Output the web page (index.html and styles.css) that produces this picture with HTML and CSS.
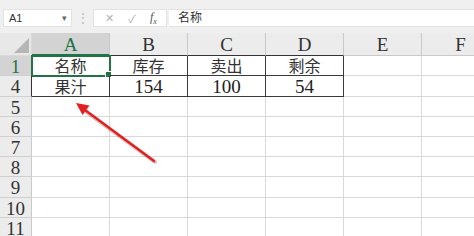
FILE: index.html
```html
<!DOCTYPE html>
<html lang="zh">
<head>
  <meta charset="UTF-8">
  <title>表格</title>
  <link rel="stylesheet" href="styles.css">
</head>
<body>
  <div class="page">
    <div class="toolbar">
      <div class="namebox">
        <span>A1</span>
        <span class="drop">&#9662;</span>
      </div>
      <div class="dots">&#8942;</div>
      <div class="fxbox">
        <span class="btn">&#10005;</span>
        <span class="btn">&#10003;</span>
        <span class="btn fx">f<sub>x</sub></span>
      </div>
      <div class="formula">名称</div>
    </div>

    <div class="sheet">
      <div class="corner"><span class="tri"></span></div>
      <div class="colhead sel">A</div>
      <div class="colhead edge">B</div>
      <div class="colhead edge">C</div>
      <div class="colhead edge">D</div>
      <div class="colhead">E</div>
      <div class="colhead">F</div>

      <div class="rowhead sel edge">1</div>
      <div class="cell t active cjk">名称</div>
      <div class="cell t cjk">库存</div>
      <div class="cell t cjk">卖出</div>
      <div class="cell t cjk">剩余</div>
      <div class="cell"></div>
      <div class="cell"></div>

      <div class="rowhead edge">4</div>
      <div class="cell t cjk">果汁</div>
      <div class="cell t">154</div>
      <div class="cell t">100</div>
      <div class="cell t">54</div>
      <div class="cell"></div>
      <div class="cell"></div>

      <div class="rowhead">5</div>
      <div class="cell"></div><div class="cell"></div><div class="cell"></div><div class="cell"></div><div class="cell"></div><div class="cell"></div>
      <div class="rowhead">6</div>
      <div class="cell"></div><div class="cell"></div><div class="cell"></div><div class="cell"></div><div class="cell"></div><div class="cell"></div>
      <div class="rowhead">7</div>
      <div class="cell"></div><div class="cell"></div><div class="cell"></div><div class="cell"></div><div class="cell"></div><div class="cell"></div>
      <div class="rowhead">8</div>
      <div class="cell"></div><div class="cell"></div><div class="cell"></div><div class="cell"></div><div class="cell"></div><div class="cell"></div>
      <div class="rowhead">9</div>
      <div class="cell"></div><div class="cell"></div><div class="cell"></div><div class="cell"></div><div class="cell"></div><div class="cell"></div>
      <div class="rowhead">10</div>
      <div class="cell"></div><div class="cell"></div><div class="cell"></div><div class="cell"></div><div class="cell"></div><div class="cell"></div>
      <div class="rowhead">11</div>
      <div class="cell"></div><div class="cell"></div><div class="cell"></div><div class="cell"></div><div class="cell"></div><div class="cell"></div>
    </div>

    <svg class="arrow" width="474" height="236" viewBox="0 0 474 236">
      <line x1="155" y1="162" x2="85" y2="111" stroke="rgba(120,0,0,0.25)" stroke-width="4" stroke-linecap="round"/>
      <line x1="154" y1="161" x2="85" y2="110" stroke="#e41f1f" stroke-width="2.4" stroke-linecap="round"/>
      <polygon points="76,103 89.5,105.5 82.5,115" fill="#e41f1f"/>
    </svg>
  </div>
</body>
</html>
```

FILE: styles.css
```css
body {
  margin: 0;
  background-color: #ffffff;
  font-family: "Liberation Serif", serif;
}
.page {
  width: 474px;
  height: 236px;
  overflow: hidden;
  position: relative;
}
.toolbar {
  height: 33px;
  background-color: #f0f0f0;
  box-sizing: border-box;
  padding: 9px 0 6px 3px;
  display: flex;
  font-family: "Liberation Sans", "Noto Sans CJK SC", sans-serif;
}
.namebox {
  width: 69px;
  background-color: #ffffff;
  border: 1px solid #e2e2e2;
  box-sizing: border-box;
  display: flex;
  align-items: center;
  justify-content: space-between;
  padding: 0 4px 0 5px;
  font-size: 11px;
  color: #333;
}
.drop {
  font-size: 9px;
  color: #666;
}
.dots {
  width: 21px;
  text-align: center;
  color: #b8b8b8;
  font-size: 12px;
  line-height: 18px;
}
.fxbox {
  width: 74px;
  background-color: #ffffff;
  border: 1px solid #e2e2e2;
  box-sizing: border-box;
  display: flex;
  align-items: center;
  justify-content: space-around;
  padding: 0 2px 0 4px;
  color: #b0b0b0;
  font-size: 11px;
}
.btn.fx {
  font-family: "Liberation Serif", serif;
  font-style: italic;
  color: #555;
  font-size: 12px;
}
.btn.fx sub {
  font-size: 8px;
}
.formula {
  flex: 1;
  margin-left: 2px;
  background-color: #ffffff;
  border-top: 1px solid #e2e2e2;
  border-bottom: 1px solid #e2e2e2;
  padding-left: 9px;
  font-size: 12px;
  line-height: 16px;
  color: #333;
}
.sheet {
  display: grid;
  grid-template-columns: 32px repeat(6, 78px);
  grid-template-rows: 23px 20px 21px 20px 20px 20px 20px 21px 20px 20px;
}
.sheet > div {
  box-sizing: border-box;
  border-right: 1px solid #d9d9d9;
  border-bottom: 1px solid #d9d9d9;
  display: flex;
  align-items: center;
  justify-content: center;
  font-size: 19px;
  line-height: 17px;
  color: #222;
  position: relative;
}
.corner {
  background-color: #e8e8e8;
}
.corner .tri {
  position: absolute;
  right: 2px;
  bottom: 2px;
  width: 0;
  height: 0;
  border-left: 15px solid transparent;
  border-bottom: 15px solid #b6b6b6;
}
.sheet > .colhead {
  background-color: #ececec;
  border-right-color: #c9c9c9;
  border-bottom-color: #c9c9c9;
  color: #333;
  padding-top: 1px;
}
.sheet > .colhead.edge {
  border-bottom-color: #333;
}
.sheet > .colhead.sel {
  background-color: #d3d3d3;
  color: #217346;
  border-bottom: 2px solid #217346;
}
.sheet > .rowhead {
  background-color: #ececec;
  border-right-color: #c9c9c9;
  border-bottom-color: #d0d0d0;
  color: #333;
  padding-top: 1px;
}
.sheet > .rowhead.edge {
  border-right-color: #333;
}
.sheet > .rowhead.sel {
  background-color: #d3d3d3;
  color: #217346;
}
.sheet > .cell.t {
  border-right-color: #3a3a3a;
  border-bottom-color: #3a3a3a;
}
.sheet > .cjk {
  font-family: "Noto Sans CJK SC", sans-serif;
  font-size: 16px;
  line-height: 17px;
  color: #333;
}
.sheet > .cell.active {
  outline: 2px solid #217346;
  outline-offset: -1px;
}
.cell.active::after {
  content: "";
  position: absolute;
  right: -3px;
  bottom: -3px;
  width: 5px;
  height: 5px;
  background-color: #217346;
  border: 1px solid #fff;
}
.arrow {
  position: absolute;
  left: 0;
  top: 0;
  pointer-events: none;
}
```
